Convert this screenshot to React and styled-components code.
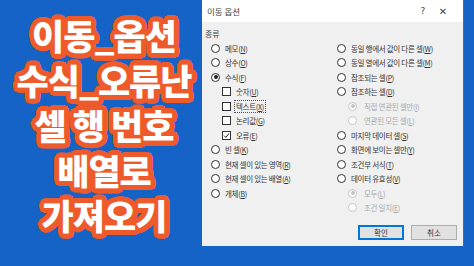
import React from "react";
import styled, { createGlobalStyle } from "styled-components";

const Global = createGlobalStyle`
  html, body { margin: 0; padding: 0; }
  body { width: 474px; height: 266px; overflow: hidden; background: #1663c7; }
`;

const strokeShadow = (() => {
  const out = [];
  const r = 5;
  for (let a = 0; a < 360; a += 15) {
    const x = (Math.cos((a * Math.PI) / 180) * r).toFixed(2);
    const y = (Math.sin((a * Math.PI) / 180) * r).toFixed(2);
    out.push(`${x}px ${y}px 0 #ef5a2a`);
  }
  for (let a = 0; a < 360; a += 30) {
    const x = (Math.cos((a * Math.PI) / 180) * 2.5).toFixed(2);
    const y = (Math.sin((a * Math.PI) / 180) * 2.5).toFixed(2);
    out.push(`${x}px ${y}px 0 #ef5a2a`);
  }
  return out.join(", ");
})();

const Page = styled.div`
  width: 474px;
  height: 266px;
  background: #1663c7;
  display: flex;
  flex-direction: row;
  align-items: flex-start;
  font-family: "Noto Sans CJK KR", "Noto Sans", sans-serif;
`;

const Headline = styled.div`
  width: 202px;
  padding-left: 6px;
  box-sizing: border-box;
  padding-top: 12px;
  display: flex;
  flex-direction: column;
  align-items: center;
`;

const Line = styled.div`
  height: 45px;
  line-height: 45px;
  font-size: 35px;
  font-weight: 900;
  letter-spacing: -1px;
  color: #ffffff;
  white-space: pre;
  text-shadow: ${strokeShadow};
`;

const Dialog = styled.div`
  width: 261px;
  height: 246px;
  background: #f0f0f0;
  border-right: 1px solid #3a6fa8;
  display: flex;
  flex-direction: column;
  font-size: 8px;
  color: #333;
`;

const TitleBar = styled.div`
  height: 22px;
  background: #ffffff;
  display: flex;
  align-items: center;
  padding-left: 5px;
  padding-right: 10px;
  color: #444;
`;

const Title = styled.span`
  flex: 1;
  font-size: 8.5px;
`;

const TitleBtn = styled.span`
  width: ${(p) => p.w}px;
  text-align: center;
  font-family: "DejaVu Sans", sans-serif;
  font-size: ${(p) => p.fs}px;
  color: #444;
`;

const Body = styled.div`
  flex: 1;
  display: flex;
  flex-direction: column;
  padding: 4px 6px 0 3px;
`;

const Group = styled.div`
  height: 15px;
  line-height: 15px;
  font-size: 8px;
  color: #444;
`;

const Columns = styled.div`
  display: flex;
  padding-left: 6px;
`;

const Col = styled.div`
  width: ${(p) => p.w}px;
  display: flex;
  flex-direction: column;
`;

const Row = styled.div`
  height: 14.5px;
  display: flex;
  align-items: center;
  padding-left: ${(p) => p.indent || 0}px;
  color: ${(p) => (p.disabled ? "#a8a8a8" : "#333")};
  white-space: nowrap;
  letter-spacing: -0.3px;
`;

const Radio = styled.span`
  width: 9px;
  height: 9px;
  box-sizing: border-box;
  border-radius: 50%;
  border: 1px solid ${(p) => (p.disabled ? "#c4c4c4" : "#333")};
  background: #fff;
  margin-right: ${(p) => p.gap || 4}px;
  flex: none;
  display: flex;
  align-items: center;
  justify-content: center;
  &::after {
    content: "";
    display: ${(p) => (p.on ? "block" : "none")};
    width: 4px;
    height: 4px;
    border-radius: 50%;
    background: ${(p) => (p.disabled ? "#c4c4c4" : "#222")};
  }
`;

const Check = styled.span`
  width: 9px;
  height: 9px;
  box-sizing: border-box;
  border: 1px solid #333;
  background: #fff;
  margin-right: 4px;
  flex: none;
  display: flex;
  align-items: center;
  justify-content: center;
`;

const Label = styled.span`
  outline: ${(p) => (p.focus ? "1px dotted #555" : "none")};
  padding: 0 1px;
  font-size: 7.5px;
`;

const Key = styled.span`
  text-decoration: underline;
  font-size: 7px;
`;

const Buttons = styled.div`
  margin-top: auto;
  display: flex;
  justify-content: flex-end;
  gap: 7px;
  margin-bottom: 6px;
`;

const Button = styled.div`
  width: 46px;
  height: 15px;
  box-sizing: border-box;
  background: #e1e1e1;
  border: 1px solid ${(p) => (p.primary ? "#0078d7" : "#adadad")};
  box-shadow: ${(p) => (p.primary ? "inset 0 0 0 1px #0078d7" : "none")};
  display: flex;
  align-items: center;
  justify-content: center;
  font-size: 7.5px;
  color: #333;
`;

function Item({ kind = "radio", on, disabled, indent, text, k, focus }) {
  return (
    <Row indent={indent} disabled={disabled}>
      {kind === "radio" ? (
        <Radio on={on} disabled={disabled} gap={disabled ? 6 : 4} />
      ) : (
        <Check>
          {on && (
            <svg width="7" height="7" viewBox="0 0 7 7">
              <path d="M1 3.6 L2.8 5.4 L6 1.4" fill="none" stroke="#222" strokeWidth="1" />
            </svg>
          )}
        </Check>
      )}
      <Label focus={focus}>
        {text}(<Key>{k}</Key>)
      </Label>
    </Row>
  );
}

const left = [
  { text: "메모", k: "N" },
  { text: "상수", k: "O" },
  { text: "수식", k: "F", on: true },
  { kind: "check", text: "숫자", k: "U", indent: 11 },
  { kind: "check", text: "텍스트", k: "X", indent: 11, focus: true },
  { kind: "check", text: "논리값", k: "G", indent: 11 },
  { kind: "check", text: "오류", k: "E", indent: 11, on: true },
  { text: "빈 셀", k: "K" },
  { text: "현재 셀이 있는 영역", k: "R" },
  { text: "현재 셀이 있는 배열", k: "A" },
  { text: "개체", k: "B" },
];

const right = [
  { text: "동일 행에서 값이 다른 셀", k: "W" },
  { text: "동일 열에서 값이 다른 셀", k: "M" },
  { text: "참조되는 셀", k: "P" },
  { text: "참조하는 셀", k: "D" },
  { text: "직접 연관된 셀만", k: "I", indent: 11, disabled: true, on: true },
  { text: "연관된 모든 셀", k: "L", indent: 11, disabled: true },
  { text: "마지막 데이터 셀", k: "S" },
  { text: "화면에 보이는 셀만", k: "Y" },
  { text: "조건부 서식", k: "T" },
  { text: "데이터 유효성", k: "V" },
  { text: "모두", k: "L", indent: 11, disabled: true, on: true },
  { text: "조건 일치", k: "E", indent: 11, disabled: true },
];

export default function App() {
  return (
    <Page>
      <Global />
      <Headline>
        <Line>이동_옵션</Line>
        <Line>수식_오류난</Line>
        <Line>셀 행 번호</Line>
        <Line>배열로</Line>
        <Line>가져오기</Line>
      </Headline>
      <Dialog>
        <TitleBar>
          <Title>이동 옵션</Title>
          <TitleBtn w={20} fs={9}>?</TitleBtn>
          <TitleBtn w={20} fs={10}>✕</TitleBtn>
        </TitleBar>
        <Body>
          <Group>종류</Group>
          <Columns>
            <Col w={126}>
              {left.map((it, i) => (
                <Item key={i} {...it} />
              ))}
            </Col>
            <Col w={120}>
              {right.map((it, i) => (
                <Item key={i} {...it} />
              ))}
            </Col>
          </Columns>
          <Buttons>
            <Button primary>확인</Button>
            <Button>취소</Button>
          </Buttons>
        </Body>
      </Dialog>
    </Page>
  );
}
